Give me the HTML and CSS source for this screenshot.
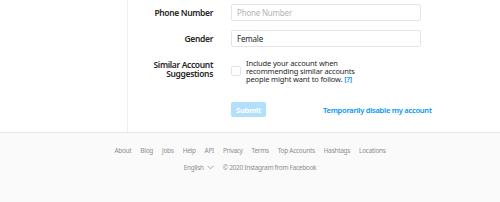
FILE: index.html
```html
<!DOCTYPE html>
<html lang="en">
<head>
<meta charset="utf-8">
<title>Edit Profile</title>
<link rel="stylesheet" href="styles.css">
</head>
<body>
<div class="page">
  <main class="box">
    <nav class="sidebar"></nav>
    <form class="form">
      <div class="row">
        <label class="label" for="phone">Phone Number</label>
        <input class="input" id="phone" type="text" placeholder="Phone Number">
      </div>
      <div class="row">
        <label class="label" for="gender">Gender</label>
        <input class="input" id="gender" type="text" value="Female">
      </div>
      <div class="row row-check">
        <label class="label label-two">Similar Account Suggestions</label>
        <div class="check">
          <span class="box-check"></span>
          <span class="check-text">Include your account when recommending similar accounts people might want to follow. <a class="help" href="#">[?]</a></span>
        </div>
      </div>
      <div class="actions">
        <button class="submit" type="button">Submit</button>
        <a class="disable" href="#">Temporarily disable my account</a>
      </div>
    </form>
  </main>
  <footer class="footer">
    <ul class="links">
      <li>About</li><li>Blog</li><li>Jobs</li><li>Help</li><li>API</li><li>Privacy</li><li>Terms</li><li>Top Accounts</li><li>Hashtags</li><li>Locations</li>
    </ul>
    <div class="meta">
      <span class="lang">English <svg class="chev" width="7" height="5" viewBox="0 0 7 5"><path d="M0.5 0.8 L3.5 3.8 L6.5 0.8" fill="none" stroke="#8e8e8e" stroke-width="0.8"/></svg></span>
      <span class="copy">© 2020 Instagram from Facebook</span>
    </div>
  </footer>
</div>
</body>
</html>
```
FILE: styles.css
```css
html, body {
  margin: 0;
  padding: 0;
  background: #fafafa;
}
body {
  font-family: "Noto Sans", "Open Sans", sans-serif;
  color: #262626;
}
.page {
  width: 500px;
  height: 202px;
  overflow: hidden;
}
.box {
  display: flex;
  height: 133px;
  background: #fff;
  border-bottom: 1px solid #e6e6e6;
  box-sizing: border-box;
}
.sidebar {
  width: 127px;
  border-right: 1px solid #efefef;
  flex: none;
}
.form {
  padding-top: 4px;
  display: flex;
  flex-direction: column;
}
.row {
  display: flex;
  align-items: center;
  height: 17px;
  margin-bottom: 9px;
}
.label {
  width: 85px;
  box-sizing: border-box;
  text-align: right;
  font-size: 8.5px;
  letter-spacing: -0.35px;
  font-weight: 600;
  line-height: 9px;
  margin-right: 18px;
  flex: none;
}
.input {
  width: 190px;
  height: 17px;
  box-sizing: border-box;
  border: 1px solid #e4e4e4;
  border-radius: 2px;
  padding: 0 5px;
  font-family: inherit;
  font-size: 8px;
  letter-spacing: -0.2px;
  color: #262626;
  background: #fff;
  outline: none;
  margin: 0;
}
.input::placeholder {
  color: #b4b4b4;
}
.row-check {
  height: auto;
  align-items: flex-start;
  margin-top: 3px;
  margin-bottom: 0;
}
.label-two {
  padding-top: 1px;
}
.check {
  display: flex;
  align-items: center;
}
.box-check {
  width: 10px;
  height: 10px;
  border: 1px solid #e4e4e4;
  border-radius: 2px;
  box-sizing: border-box;
  margin: 0 5px 1px 0;
  flex: none;
}
.check-text {
  width: 114px;
  font-size: 7.5px;
  letter-spacing: -0.15px;
  line-height: 8px;
  color: #262626;
}
.help {
  display: inline-block;
  line-height: 8px;
  color: #0095f6;
  text-decoration: none;
  font-weight: 600;
}
.actions {
  display: flex;
  align-items: center;
  margin-top: 19px;
  margin-left: 103px;
}
.submit {
  width: 35px;
  height: 15px;
  border: none;
  border-radius: 2px;
  background: #b2dffc;
  color: #fff;
  font-family: inherit;
  font-size: 7.5px;
  letter-spacing: -0.3px;
  font-weight: 700;
  padding: 0;
}
.disable {
  margin-left: 57px;
  color: #0095f6;
  font-size: 7.5px;
  letter-spacing: -0.25px;
  font-weight: 600;
  text-decoration: none;
}
.footer {
  padding-top: 13px;
  font-size: 6.5px;
  letter-spacing: -0.3px;
  color: #8e8e8e;
}
.links {
  list-style: none;
  margin: 0;
  padding: 0;
  display: flex;
  justify-content: center;
  gap: 9px;
  line-height: 9px;
}
.meta {
  display: flex;
  justify-content: center;
  gap: 9px;
  margin-top: 8px;
  line-height: 9px;
}
.lang {
  display: flex;
  align-items: center;
  gap: 3px;
}
```
